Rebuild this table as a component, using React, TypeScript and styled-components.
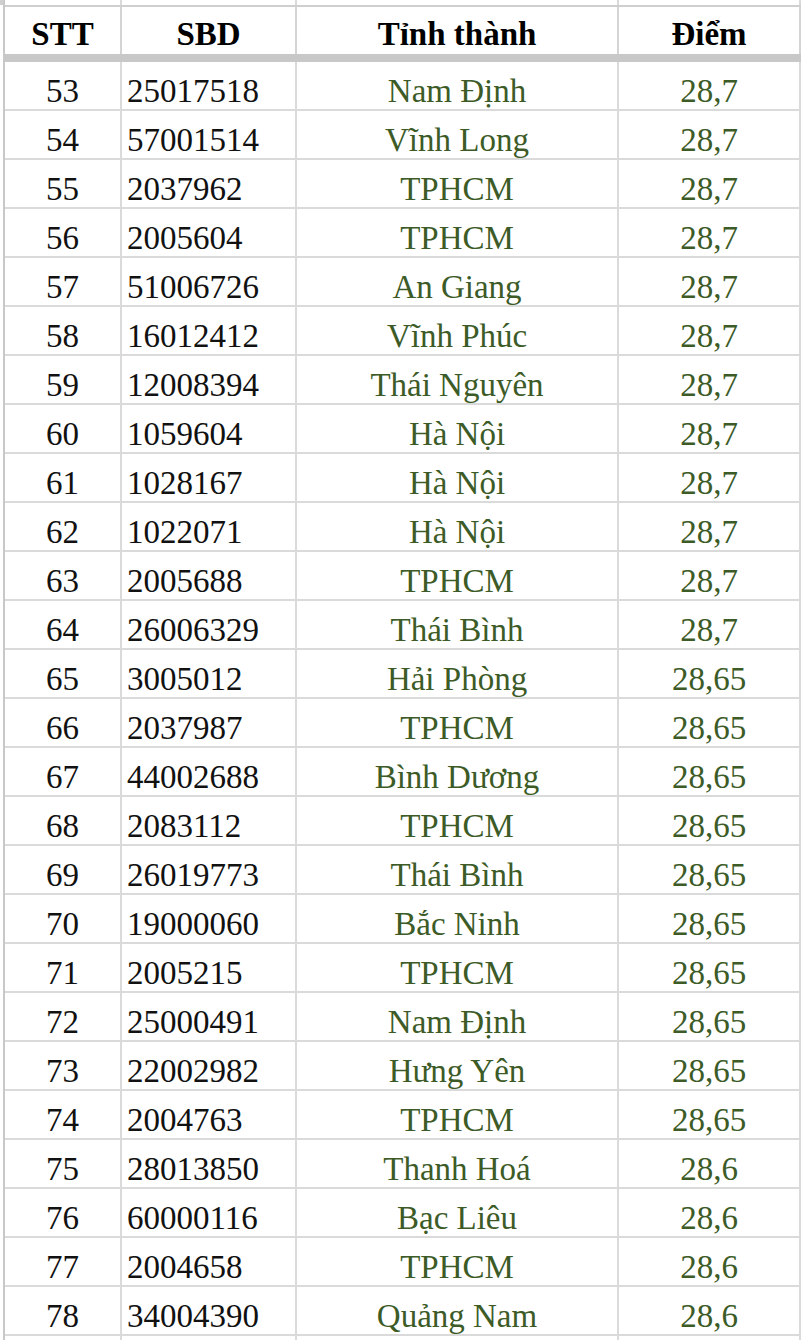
import React, { FC } from 'react';
import styled, { createGlobalStyle } from 'styled-components';

const GlobalStyle = createGlobalStyle`
  html, body {
    margin: 0;
    padding: 0;
    background: #ffffff;
  }
  body {
    font-family: 'Liberation Serif', 'Times New Roman', serif;
  }
`;

const GRID = '#dadada';
const GREEN = '#3c5b27';

type Row = [number, string, string, string];

const rows: Row[] = [
  [53, '25017518', 'Nam Định', '28,7'],
  [54, '57001514', 'Vĩnh Long', '28,7'],
  [55, '2037962', 'TPHCM', '28,7'],
  [56, '2005604', 'TPHCM', '28,7'],
  [57, '51006726', 'An Giang', '28,7'],
  [58, '16012412', 'Vĩnh Phúc', '28,7'],
  [59, '12008394', 'Thái Nguyên', '28,7'],
  [60, '1059604', 'Hà Nội', '28,7'],
  [61, '1028167', 'Hà Nội', '28,7'],
  [62, '1022071', 'Hà Nội', '28,7'],
  [63, '2005688', 'TPHCM', '28,7'],
  [64, '26006329', 'Thái Bình', '28,7'],
  [65, '3005012', 'Hải Phòng', '28,65'],
  [66, '2037987', 'TPHCM', '28,65'],
  [67, '44002688', 'Bình Dương', '28,65'],
  [68, '2083112', 'TPHCM', '28,65'],
  [69, '26019773', 'Thái Bình', '28,65'],
  [70, '19000060', 'Bắc Ninh', '28,65'],
  [71, '2005215', 'TPHCM', '28,65'],
  [72, '25000491', 'Nam Định', '28,65'],
  [73, '22002982', 'Hưng Yên', '28,65'],
  [74, '2004763', 'TPHCM', '28,65'],
  [75, '28013850', 'Thanh Hoá', '28,6'],
  [76, '60000116', 'Bạc Liêu', '28,6'],
  [77, '2004658', 'TPHCM', '28,6'],
  [78, '34004390', 'Quảng Nam', '28,6'],
];

const Page = styled.div`
  position: relative;
  width: 804px;
  height: 1340px;
  overflow: hidden;
  background: #fff;
`;

const Corner = styled.div`
  position: absolute;
  top: 0;
  left: 0;
  width: 3px;
  height: 5px;
  background: #cfcfcf;
`;

const Sheet = styled.div`
  margin-left: 3px;
  width: 798px;
  border-left: 2px solid #c8c8c8;
  box-sizing: border-box;
`;

const Line = styled.div<{ $height: number; $border: number; $borderColor: string }>`
  display: grid;
  grid-template-columns: 117px 175px 322px 182px;
  height: ${p => p.$height + p.$border}px;
  box-sizing: border-box;
  border-bottom: ${p => p.$border}px solid ${p => p.$borderColor};
`;

const Cell = styled.div<{ $align?: 'left' | 'center'; $color?: string; $bold?: boolean }>`
  display: flex;
  align-items: flex-end;
  justify-content: ${p => (p.$align === 'left' ? 'flex-start' : 'center')};
  padding: 0 0 0 ${p => (p.$align === 'left' ? '5px' : '0')};
  border-right: 2px solid ${GRID};
  font-size: 33px;
  line-height: 36px;
  font-weight: ${p => (p.$bold ? 700 : 400)};
  color: ${p => p.$color || '#111'};
  white-space: nowrap;
  overflow: hidden;
`;

const HeaderCell = styled(Cell)`
  padding-bottom: 2px;
  border-right-color: #d4d4d4;
`;

const App: FC = () => (
  <Page>
    <GlobalStyle />
    <Corner />
    <Sheet>
      <Line $height={5} $border={2} $borderColor="#cfcfcf">
        <Cell />
        <Cell />
        <Cell />
        <Cell />
      </Line>
      <Line $height={47} $border={8} $borderColor="#c8c8c8">
        <HeaderCell $bold $color="#000">STT</HeaderCell>
        <HeaderCell $bold $color="#000">SBD</HeaderCell>
        <HeaderCell $bold $color="#000">Tỉnh thành</HeaderCell>
        <HeaderCell $bold $color="#000">Điểm</HeaderCell>
      </Line>
      {rows.map(([stt, sbd, tinh, diem]) => (
        <Line key={stt} $height={47} $border={2} $borderColor={GRID}>
          <Cell>{stt}</Cell>
          <Cell $align="left">{sbd}</Cell>
          <Cell $color={GREEN}>{tinh}</Cell>
          <Cell $color={GREEN}>{diem}</Cell>
        </Line>
      ))}
      <Line $height={10} $border={0} $borderColor={GRID}>
        <Cell />
        <Cell />
        <Cell />
        <Cell />
      </Line>
    </Sheet>
  </Page>
);

export default App;
